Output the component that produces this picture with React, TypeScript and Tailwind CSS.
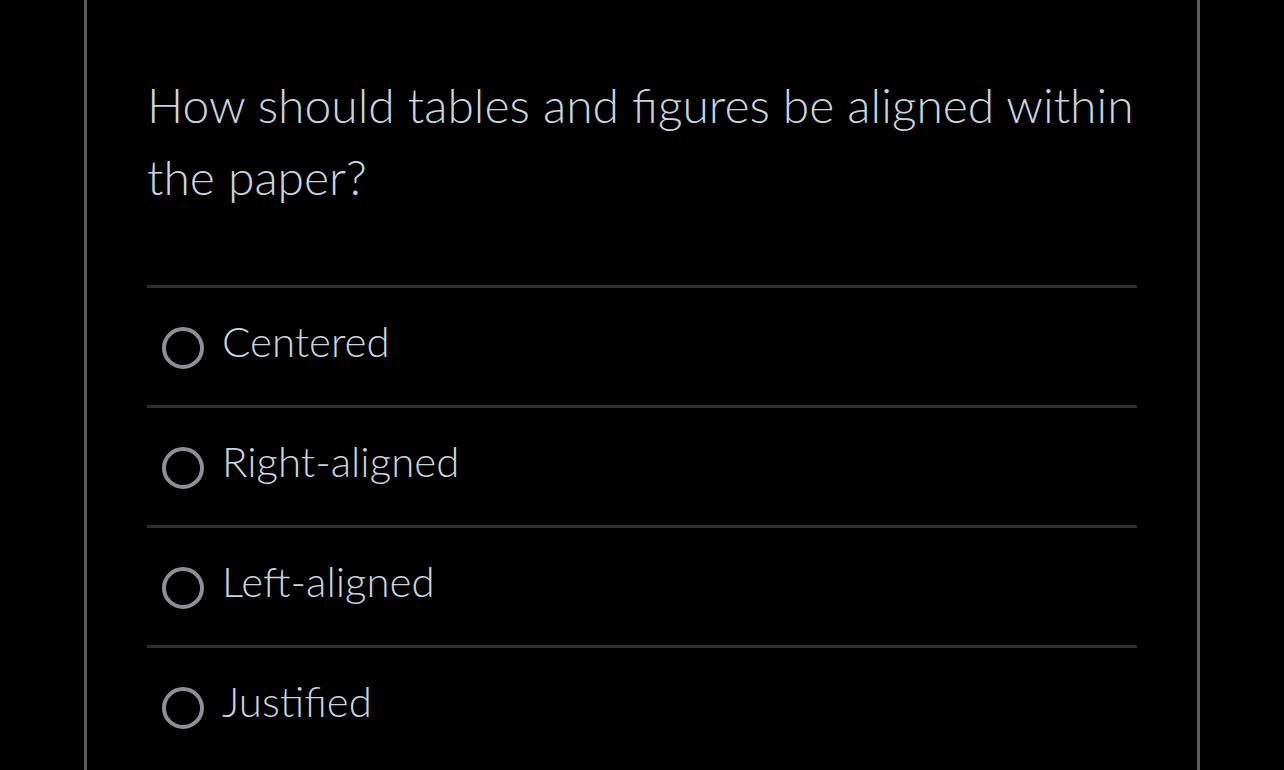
import React from 'react';

const options = ['Centered', 'Right-aligned', 'Left-aligned', 'Justified'];

export default function App() {
  return (
    <div className="h-[770px] w-[1284px] overflow-hidden bg-black" style={{ fontFamily: 'Lato, "Liberation Sans", sans-serif' }}>
      <div className="ml-[84px] h-full w-[1116px] border-x-[3px] border-[#5b5b5b] px-[60px] pt-[69px]">
        <h2 className="text-[48px] font-light leading-[72px] text-[#c9d4de]">
          How should tables and figures be aligned within the paper?
        </h2>

        <div className="mt-[72px]">
          {options.map((opt) => (
            <label key={opt} className="flex h-[120px] items-start border-t-[3px] border-[#2e2e2e] pt-[28px]">
              <span className="ml-[15px] mt-[11px] h-[42px] w-[42px] shrink-0 rounded-full border-[4px] border-[#8f8e94]" />
              <span className="ml-[18px] text-[42px] font-light leading-[1.2] text-[#c9d4de]">{opt}</span>
            </label>
          ))}
        </div>
      </div>
    </div>
  );
}
